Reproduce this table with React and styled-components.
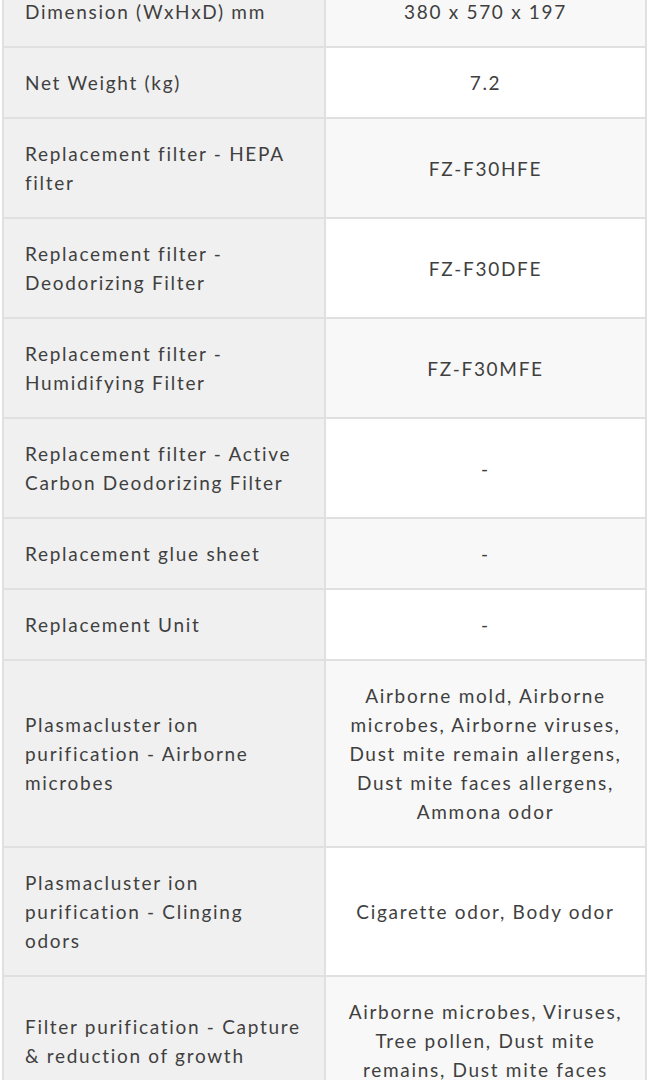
import styled, { createGlobalStyle } from "styled-components";

const specs = [
  ["Dimension (WxHxD) mm", "380 x 570 x 197"],
  ["Net Weight (kg)", "7.2"],
  ["Replacement filter - HEPA filter", "FZ-F30HFE"],
  ["Replacement filter - Deodorizing Filter", "FZ-F30DFE"],
  ["Replacement filter - Humidifying Filter", "FZ-F30MFE"],
  ["Replacement filter - Active Carbon Deodorizing Filter", "-"],
  ["Replacement glue sheet", "-"],
  ["Replacement Unit", "-"],
  [
    "Plasmacluster ion purification - Airborne microbes",
    "Airborne mold, Airborne microbes, Airborne viruses, Dust mite remain allergens, Dust mite faces allergens, Ammona odor",
  ],
  ["Plasmacluster ion purification - Clinging odors", "Cigarette odor, Body odor"],
  [
    "Filter purification - Capture & reduction of growth",
    "Airborne microbes, Viruses, Tree pollen, Dust mite remains, Dust mite faces",
  ],
];

export default function App() {
  return (
    <>
      <GlobalStyle />
      <Page>
        <SpecTable>
          <colgroup>
            <col style={{ width: "322px" }} />
            <col />
          </colgroup>
          <tbody>
            {specs.map(([label, value], i) => (
              <tr key={label}>
                <LabelCell>{label}</LabelCell>
                <ValueCell $striped={i % 2 === 0}>{value}</ValueCell>
              </tr>
            ))}
          </tbody>
        </SpecTable>
      </Page>
    </>
  );
}

const GlobalStyle = createGlobalStyle`
  html, body {
    margin: 0;
    padding: 0;
    background: #ffffff;
    overflow: hidden;
  }
  body {
    font-family: Lato, "Noto Sans", sans-serif;
    color: #3f3f3f;
  }
`;

const Page = styled.div`
  padding: 0 1px 0 2px;
  margin-top: -25px;
`;

const SpecTable = styled.table`
  width: 645px;
  border-collapse: collapse;
  table-layout: fixed;
  border: 2px solid #e0e0e0;
`;

const Cell = styled.td`
  border: 2px solid #e0e0e0;
  padding: 20px;
  font-size: 19px;
  line-height: 29px;
  letter-spacing: 1.7px;
  vertical-align: middle;
`;

const LabelCell = styled(Cell)`
  padding-left: 21px;
  padding-right: 22px;
  background: #f0f0f0;
  text-align: left;
`;

const ValueCell = styled(Cell)`
  background: ${({ $striped }) => ($striped ? "#f8f8f8" : "#ffffff")};
  text-align: center;
`;
